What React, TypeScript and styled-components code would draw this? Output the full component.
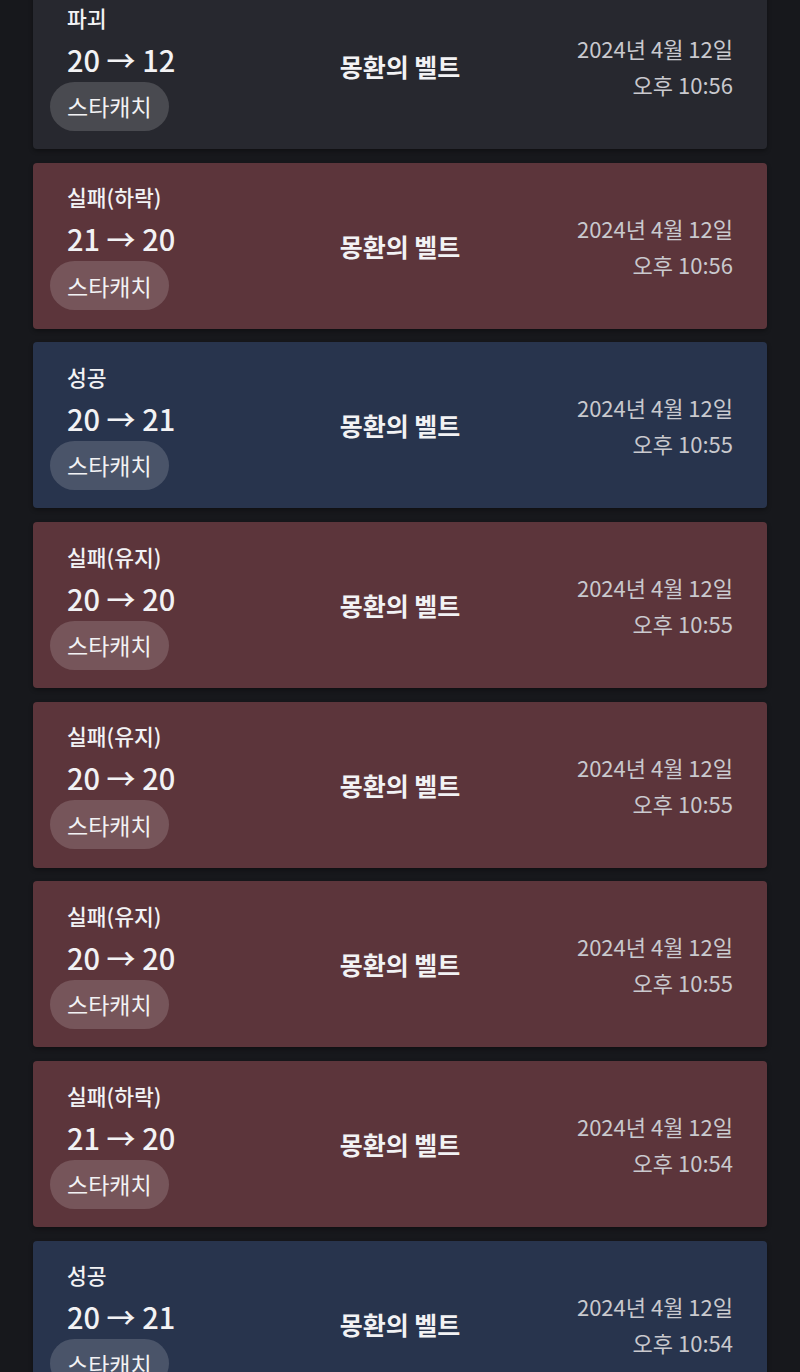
import styled, { createGlobalStyle } from 'styled-components';

const GlobalStyle = createGlobalStyle`
  html, body {
    margin: 0;
    padding: 0;
    background: #17181c;
  }
  body {
    font-family: 'Noto Sans CJK KR', 'Noto Sans', sans-serif;
    color: #f2f2f4;
  }
`;

type Kind = 'destroy' | 'fail' | 'success';

const cardColors: Record<Kind, string> = {
  destroy: '#27282f',
  fail: '#5c353b',
  success: '#28344d',
};

const List = styled.div`
  display: flex;
  flex-direction: column;
  gap: 13.7px;
  padding: 0 33px;
  margin-top: -17px;
`;

const Card = styled.div<{ $kind: Kind }>`
  display: grid;
  grid-template-columns: 1fr auto 1fr;
  align-items: center;
  height: 166px;
  box-sizing: border-box;
  padding: 0 34px;
  border-radius: 4px;
  background: ${(p) => cardColors[p.$kind]};
  box-shadow: 0 2px 4px rgba(0, 0, 0, 0.35);
`;

const Left = styled.div`
  display: flex;
  flex-direction: column;
  align-items: flex-start;
  padding-top: 2px;
`;

const Result = styled.div`
  font-size: 21.5px;
  font-weight: 500;
  line-height: 28px;
`;

const Level = styled.div`
  font-size: 29px;
  font-weight: 500;
  line-height: 44px;
  margin-top: 5px;
`;

const Pill = styled.span`
  display: inline-flex;
  align-items: center;
  height: 49px;
  margin-top: 1px;
  margin-left: -17px;
  padding: 0 17px;
  border-radius: 25px;
  background: rgba(255, 255, 255, 0.16);
  font-size: 23px;
  font-weight: 400;
`;

const ItemName = styled.div`
  font-size: 25px;
  font-weight: 700;
  text-align: center;
`;

const DateBox = styled.div`
  justify-self: end;
  text-align: right;
  font-size: 22px;
  line-height: 36px;
  color: #c9c9ce;
`;

interface Entry {
  result: string;
  kind: Kind;
  from: number;
  to: number;
  time: string;
}

const entries: Entry[] = [
  { result: '파괴', kind: 'destroy', from: 20, to: 12, time: '10:56' },
  { result: '실패(하락)', kind: 'fail', from: 21, to: 20, time: '10:56' },
  { result: '성공', kind: 'success', from: 20, to: 21, time: '10:55' },
  { result: '실패(유지)', kind: 'fail', from: 20, to: 20, time: '10:55' },
  { result: '실패(유지)', kind: 'fail', from: 20, to: 20, time: '10:55' },
  { result: '실패(유지)', kind: 'fail', from: 20, to: 20, time: '10:55' },
  { result: '실패(하락)', kind: 'fail', from: 21, to: 20, time: '10:54' },
  { result: '성공', kind: 'success', from: 20, to: 21, time: '10:54' },
];

export default function App(): JSX.Element {
  return (
    <>
      <GlobalStyle />
      <List>
        {entries.map((e, i) => (
          <Card key={i} $kind={e.kind}>
            <Left>
              <Result>{e.result}</Result>
              <Level>
                {e.from} → {e.to}
              </Level>
              <Pill>스타캐치</Pill>
            </Left>
            <ItemName>몽환의 벨트</ItemName>
            <DateBox>
              <div>2024년 4월 12일</div>
              <div>오후 {e.time}</div>
            </DateBox>
          </Card>
        ))}
      </List>
    </>
  );
}
